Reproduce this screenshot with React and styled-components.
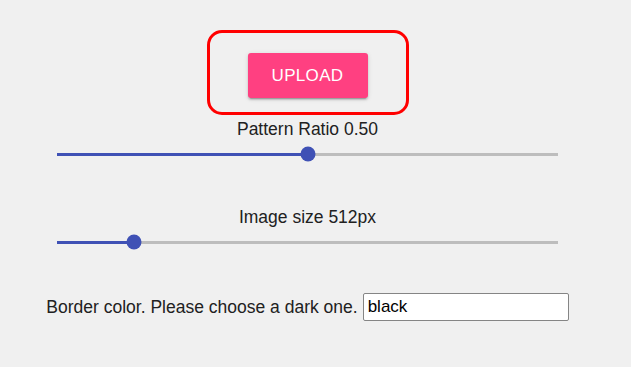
import React from 'react';
import styled, { createGlobalStyle } from 'styled-components';

const BLUE = '#3f51b5';
const PINK = '#ff4081';

const GlobalStyle = createGlobalStyle`
  html, body {
    margin: 0;
    padding: 0;
    background: #f0f0f0;
  }
  body {
    font-family: "Liberation Sans", Arial, sans-serif;
    color: #212121;
  }
`;

function Slider({ label, value }) {
  return (
    <Control>
      <Label>{label}</Label>
      <SliderRoot>
        <Track>
          <Fill style={{ width: value * 100 + '%' }} />
          <Thumb style={{ left: value * 100 + '%' }} />
        </Track>
      </SliderRoot>
    </Control>
  );
}

export default function App() {
  return (
    <>
      <GlobalStyle />
      <Page>
        <Highlight>
          <UploadButton type="button">Upload</UploadButton>
        </Highlight>
        <Slider label="Pattern Ratio 0.50" value={0.5} />
        <Spacer />
        <Slider label="Image size 512px" value={0.154} />
        <BorderRow>
          <span>Border color. Please choose a dark one.</span>
          <ColorInput defaultValue="black" />
        </BorderRow>
      </Page>
    </>
  );
}

const Page = styled.main`
  width: 615px;
  padding-top: 30px;
  display: flex;
  flex-direction: column;
  align-items: center;
`;

const Highlight = styled.div`
  border: 3px solid #ff0000;
  border-radius: 15px;
  padding: 20px 38px 14px;
  margin-bottom: 4px;
`;

const UploadButton = styled.button`
  display: block;
  width: 120px;
  height: 45px;
  border: none;
  border-radius: 3px;
  background: ${PINK};
  color: #fff;
  font-family: "Liberation Sans", Arial, sans-serif;
  font-size: 17px;
  letter-spacing: 0.02em;
  text-transform: uppercase;
  box-shadow: 0 3px 1px -2px rgba(0, 0, 0, 0.2), 0 2px 2px 0 rgba(0, 0, 0, 0.14),
    0 1px 5px 0 rgba(0, 0, 0, 0.12);
  cursor: pointer;
`;

const Control = styled.div`
  width: 501px;
  display: flex;
  flex-direction: column;
  align-items: center;
`;

const Label = styled.div`
  font-size: 17.5px;
  line-height: 20px;
`;

const SliderRoot = styled.div`
  width: 100%;
  height: 30px;
  display: flex;
  align-items: center;
`;

const Track = styled.div`
  position: relative;
  width: 100%;
  height: 3px;
  background: #bdbdbd;
`;

const Fill = styled.div`
  height: 100%;
  background: ${BLUE};
`;

const Thumb = styled.span`
  position: absolute;
  top: 50%;
  width: 15px;
  height: 15px;
  border-radius: 50%;
  background: ${BLUE};
  transform: translate(-50%, -50%);
`;

const Spacer = styled.div`
  height: 38px;
`;

const BorderRow = styled.div`
  margin-top: 36px;
  display: flex;
  align-items: center;
  gap: 5px;
  font-size: 17.5px;
`;

const ColorInput = styled.input`
  width: 206px;
  height: 28px;
  box-sizing: border-box;
  padding: 0 4px;
  border: 1px solid #858585;
  border-radius: 2px;
  background: #fff;
  font-family: "Liberation Sans", Arial, sans-serif;
  font-size: 17px;
  color: #000;
`;
